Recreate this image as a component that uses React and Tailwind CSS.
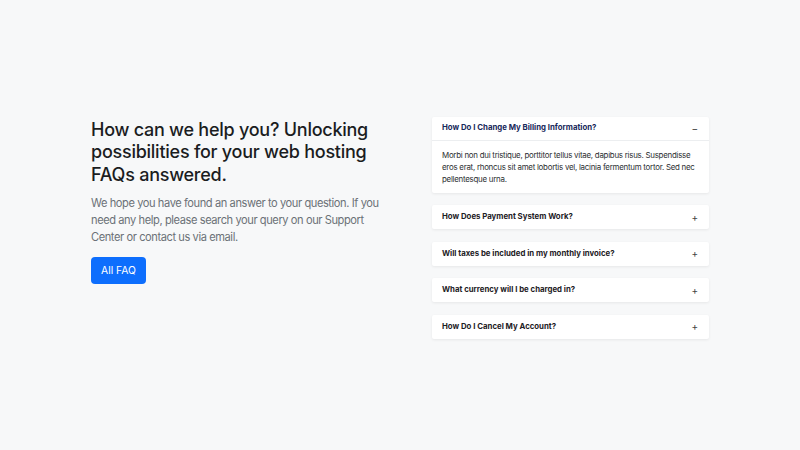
import { useState } from "react";

const FAQS = [
  {
    q: "How Do I Change My Billing Information?",
    a: "Morbi non dui tristique, porttitor tellus vitae, dapibus risus. Suspendisse eros erat, rhoncus sit amet lobortis vel, lacinia fermentum tortor. Sed nec pellentesque urna.",
  },
  { q: "How Does Payment System Work?", a: "" },
  { q: "Will taxes be included in my monthly invoice?", a: "" },
  { q: "What currency will I be charged in?", a: "" },
  { q: "How Do I Cancel My Account?", a: "" },
];

export default function App() {
  const [open, setOpen] = useState(0);

  return (
    <div
      className="min-h-[450px] w-full bg-[#f7f8f9] flex items-center justify-center"
      style={{ fontFamily: "Inter, 'Liberation Sans', sans-serif" }}
    >
      <div className="flex items-start gap-[49px] pt-[3px]">
        {/* Left */}
        <div className="w-[292px] pt-[4px]">
          <h1 className="w-[280px] text-[18px] leading-[22.5px] font-medium text-[#1b1d1f] tracking-[-0.25px]">
            How can we help you? Unlocking possibilities for your web hosting FAQs answered.
          </h1>
          <p className="mt-[9px] text-[11.1px] leading-[16.8px] text-[#6b7177] tracking-[-0.42px]">
            We hope you have found an answer to your question. If you need any help, please search your query on our Support Center or contact us via email.
          </p>
          <button className="mt-[12px] h-[27px] w-[55px] rounded-[4px] bg-[#0d6efd] text-white text-[10.3px]">
            All FAQ
          </button>
        </div>

        {/* Right */}
        <div className="mt-[2px] w-[277px] flex flex-col gap-[12.5px]">
          {FAQS.map((f, i) => {
            const isOpen = open === i;
            return (
              <div key={i} className="bg-white rounded-[2px] shadow-[0_1px_3px_rgba(0,0,0,0.07)]">
                <button
                  onClick={() => setOpen(isOpen ? -1 : i)}
                  className={`w-full h-[24px] flex items-center justify-between pl-[10px] pr-[10px] text-left ${isOpen ? "border-b border-[#eceef0]" : ""}`}
                >
                  <span className={`text-[7.8px] font-bold ${isOpen ? "text-[#17285a]" : "text-[#1d2024]"}`}>
                    {f.q}
                  </span>
                  <span className="text-[10px] text-[#444] leading-none mr-[1px] -mt-[1px]">{isOpen ? "−" : "+"}</span>
                </button>
                {isOpen && (
                  <p className="pl-[10px] pr-[6px] pt-[8px] pb-[8px] text-[7.9px] leading-[12px] text-[#2b2e31] tracking-[-0.25px]">
                    {f.a}
                  </p>
                )}
              </div>
            );
          })}
        </div>
      </div>
    </div>
  );
}
